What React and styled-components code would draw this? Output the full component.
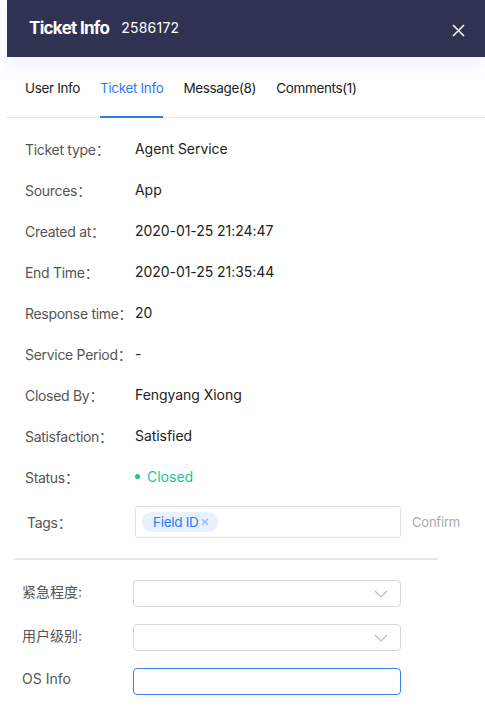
import styled, { createGlobalStyle } from 'styled-components';

const Global = createGlobalStyle`
    body {
        margin: 0;
        background: #fff;
        font-family: Inter, "Noto Sans CJK SC", sans-serif;
    }
`;

const Panel = styled.div`
    width: 485px;
    height: 720px;
    padding-left: 7px;
    box-sizing: border-box;
    overflow: hidden;
    background: #fff;
`;

const Header = styled.div`
    height: 57px;
    display: flex;
    align-items: center;
    padding: 0 0 2px 22px;
    box-sizing: border-box;
    background-color: #2f3250;
    color: #fff;
    box-shadow: 0 8px 16px rgba(120, 140, 255, 0.12);
`;

const Title = styled.h1`
    margin: 0;
    font-size: 17px;
    font-weight: 700;
    letter-spacing: -0.7px;
`;

const TicketNo = styled.span`
    margin-left: 12px;
    font-size: 14px;
    letter-spacing: 0.2px;
`;

const Close = styled.button`
    margin-left: auto;
    margin-right: 20px;
    margin-top: 5px;
    padding: 0;
    border: none;
    background: none;
    display: flex;
    cursor: pointer;
`;

const Tabs = styled.div`
    height: 60px;
    display: flex;
    gap: 20px;
    padding-left: 18px;
    border-bottom: 1px solid #e6e6e6;
`;

const Tab = styled.div`
    display: flex;
    align-items: center;
    padding-top: 3px;
    font-size: 13.5px;
    letter-spacing: -0.35px;
    color: ${p => (p.active ? '#2f7bf5' : '#222')};
    border-bottom: 2px solid ${p => (p.active ? '#2f7bf5' : 'transparent')};
    margin-bottom: -1px;
`;

const Info = styled.div`
    padding: 10px 0 0 18px;
`;

const Row = styled.div`
    height: 41px;
    display: flex;
    align-items: center;
    font-size: 14px;
`;

const Label = styled.div`
    width: 110px;
    flex-shrink: 0;
    color: #555;
    letter-spacing: -0.3px;
    padding-left: ${p => p.shift || 0}px;
    box-sizing: border-box;
`;

const Value = styled.div`
    color: #222;
    letter-spacing: -0.05px;
`;

const Status = styled.div`
    display: flex;
    align-items: center;
    gap: 7px;
    color: #17c79b;
    &::before {
        content: '';
        width: 5px;
        height: 5px;
        border-radius: 50%;
        background: #17c79b;
    }
`;

const TagRow = styled(Row)`
    height: 34px;
    margin-top: 8px;
`;

const TagBox = styled.div`
    width: 266px;
    height: 32px;
    box-sizing: border-box;
    border: 1px solid #e3e3e3;
    border-radius: 3px;
    display: flex;
    align-items: center;
    padding-left: 6px;
`;

const Tag = styled.span`
    height: 20px;
    padding: 0 9px 0 11px;
    border-radius: 10px;
    background: #e8f0fe;
    color: #2f7bf5;
    font-size: 13.5px;
    letter-spacing: -0.3px;
    display: flex;
    align-items: center;
    gap: 3px;
`;

const Confirm = styled.span`
    margin-left: 11px;
    color: #aaa;
    font-size: 13px;
    letter-spacing: -0.2px;
`;

const Divider = styled.div`
    width: 424px;
    margin: 19px 0 0 7px;
    border-top: 2px solid #e8e8e8;
`;

const Form = styled.div`
    padding: 20px 0 0 15px;
    display: flex;
    flex-direction: column;
    gap: 17px;
`;

const FormRow = styled.div`
    display: flex;
    align-items: center;
`;

const FormLabel = styled.div`
    width: 111px;
    flex-shrink: 0;
    margin-top: -6px;
    color: #555;
    font-size: 14px;
`;

const Field = styled.div`
    width: 268px;
    height: 27px;
    box-sizing: border-box;
    border: 1px solid ${p => (p.focus ? '#3a80f0' : '#d6d6d6')};
    border-radius: 4px;
    display: flex;
    align-items: center;
    justify-content: flex-end;
    padding-right: 12px;
`;

const Chevron = () => (
    <svg width="14" height="8" viewBox="0 0 14 8" fill="none">
        <path d="M1 1l6 6 6-6" stroke="#bbb" strokeWidth="1.2" />
    </svg>
);

const TagClose = () => (
    <svg width="8" height="8" viewBox="0 0 8 8">
        <path d="M1 1l6 6M7 1L1 7" stroke="#8fb3f5" strokeWidth="1.1" />
    </svg>
);

const rows = [
    ['Ticket type：', 'Agent Service'],
    ['Sources：', 'App'],
    ['Created at：', '2020-01-25 21:24:47'],
    ['End Time：', '2020-01-25 21:35:44'],
    ['Response time：', '20'],
    ['Service Period：', '-'],
    ['Closed By：', 'Fengyang Xiong'],
    ['Satisfaction：', 'Satisfied'],
];

const App = () => {
    return (
        <Panel>
            <Global />
            <Header>
                <Title>Ticket Info</Title>
                <TicketNo>2586172</TicketNo>
                <Close>
                    <svg width="13" height="13" viewBox="0 0 13 13">
                        <path d="M1 1l11 11M12 1L1 12" stroke="#fff" strokeWidth="1.5" />
                    </svg>
                </Close>
            </Header>

            <Tabs>
                <Tab>User Info</Tab>
                <Tab active>Ticket Info</Tab>
                <Tab>Message(8)</Tab>
                <Tab>Comments(1)</Tab>
            </Tabs>

            <Info>
                {rows.map(([k, v]) => (
                    <Row key={k}>
                        <Label>{k}</Label>
                        <Value>{v}</Value>
                    </Row>
                ))}
                <Row>
                    <Label>Status：</Label>
                    <Status>Closed</Status>
                </Row>
                <TagRow>
                    <Label shift={2}>Tags：</Label>
                    <TagBox>
                        <Tag>Field ID<TagClose /></Tag>
                    </TagBox>
                    <Confirm>Confirm</Confirm>
                </TagRow>
            </Info>

            <Divider />

            <Form>
                <FormRow>
                    <FormLabel>紧急程度:</FormLabel>
                    <Field><Chevron /></Field>
                </FormRow>
                <FormRow>
                    <FormLabel>用户级别:</FormLabel>
                    <Field><Chevron /></Field>
                </FormRow>
                <FormRow>
                    <FormLabel>OS Info</FormLabel>
                    <Field focus />
                </FormRow>
            </Form>
        </Panel>
    );
}
export default App;
